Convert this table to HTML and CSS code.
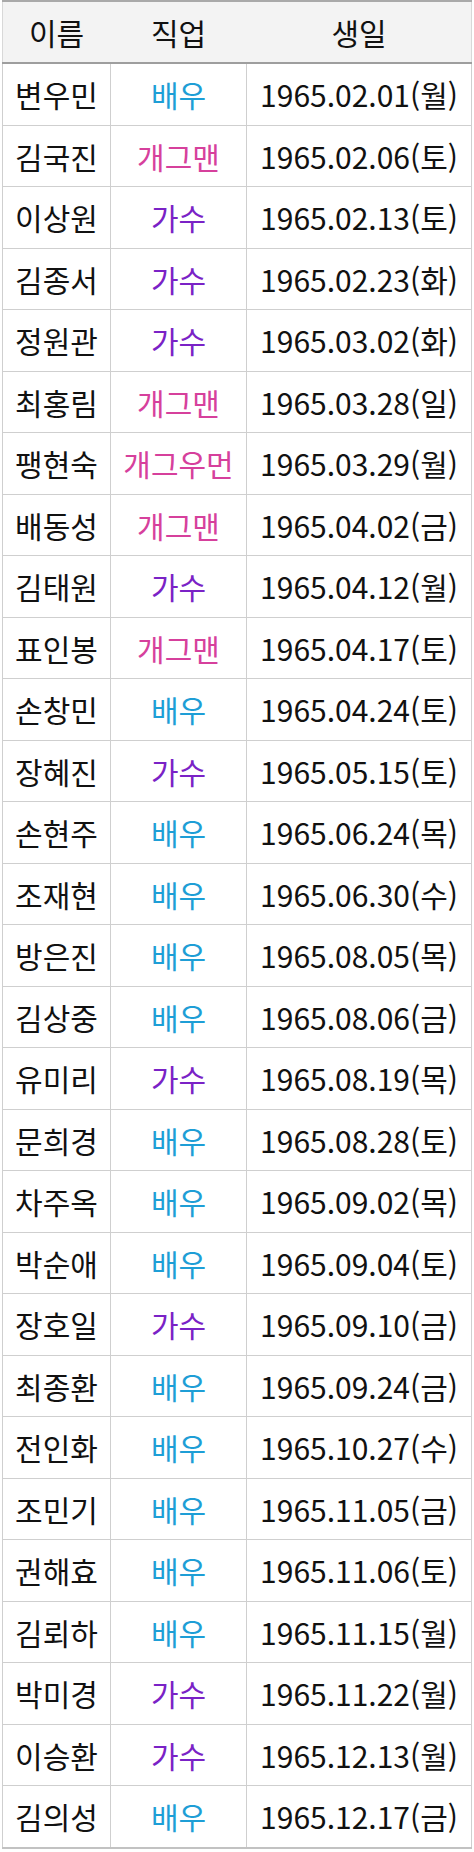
FILE: index.html
```html
<!DOCTYPE html>
<html lang="ko">
<head>
<meta charset="utf-8">
<link rel="stylesheet" href="styles.css">
</head>
<body>
<div class="wrap">
<table class="tbl">
<colgroup><col class="c1"><col class="c2"><col class="c3"></colgroup>
<thead>
<tr><th>이름</th><th>직업</th><th>생일</th></tr>
</thead>
<tbody>
<tr><td>변우민</td><td class="actor">배우</td><td>1965.02.01(월)</td></tr>
<tr><td>김국진</td><td class="comic">개그맨</td><td>1965.02.06(토)</td></tr>
<tr><td>이상원</td><td class="singer">가수</td><td>1965.02.13(토)</td></tr>
<tr><td>김종서</td><td class="singer">가수</td><td>1965.02.23(화)</td></tr>
<tr><td>정원관</td><td class="singer">가수</td><td>1965.03.02(화)</td></tr>
<tr><td>최홍림</td><td class="comic">개그맨</td><td>1965.03.28(일)</td></tr>
<tr><td>팽현숙</td><td class="comic">개그우먼</td><td>1965.03.29(월)</td></tr>
<tr><td>배동성</td><td class="comic">개그맨</td><td>1965.04.02(금)</td></tr>
<tr><td>김태원</td><td class="singer">가수</td><td>1965.04.12(월)</td></tr>
<tr><td>표인봉</td><td class="comic">개그맨</td><td>1965.04.17(토)</td></tr>
<tr><td>손창민</td><td class="actor">배우</td><td>1965.04.24(토)</td></tr>
<tr><td>장혜진</td><td class="singer">가수</td><td>1965.05.15(토)</td></tr>
<tr><td>손현주</td><td class="actor">배우</td><td>1965.06.24(목)</td></tr>
<tr><td>조재현</td><td class="actor">배우</td><td>1965.06.30(수)</td></tr>
<tr><td>방은진</td><td class="actor">배우</td><td>1965.08.05(목)</td></tr>
<tr><td>김상중</td><td class="actor">배우</td><td>1965.08.06(금)</td></tr>
<tr><td>유미리</td><td class="singer">가수</td><td>1965.08.19(목)</td></tr>
<tr><td>문희경</td><td class="actor">배우</td><td>1965.08.28(토)</td></tr>
<tr><td>차주옥</td><td class="actor">배우</td><td>1965.09.02(목)</td></tr>
<tr><td>박순애</td><td class="actor">배우</td><td>1965.09.04(토)</td></tr>
<tr><td>장호일</td><td class="singer">가수</td><td>1965.09.10(금)</td></tr>
<tr><td>최종환</td><td class="actor">배우</td><td>1965.09.24(금)</td></tr>
<tr><td>전인화</td><td class="actor">배우</td><td>1965.10.27(수)</td></tr>
<tr><td>조민기</td><td class="actor">배우</td><td>1965.11.05(금)</td></tr>
<tr><td>권해효</td><td class="actor">배우</td><td>1965.11.06(토)</td></tr>
<tr><td>김뢰하</td><td class="actor">배우</td><td>1965.11.15(월)</td></tr>
<tr><td>박미경</td><td class="singer">가수</td><td>1965.11.22(월)</td></tr>
<tr><td>이승환</td><td class="singer">가수</td><td>1965.12.13(월)</td></tr>
<tr><td>김의성</td><td class="actor">배우</td><td>1965.12.17(금)</td></tr>
</tbody>
</table>
</div>
</body>
</html>
```

FILE: styles.css
```css
html, body {
  margin: 0;
  padding: 0;
  background: #ffffff;
}
.wrap {
  padding: 0 3px 0 2px;
}
.tbl {
  width: 469px;
  border-collapse: collapse;
  table-layout: fixed;
  font-family: "Noto Sans CJK KR", "Noto Sans", sans-serif;
  font-size: 30px;
  color: #111;
}
.c1 { width: 108px; }
.c2 { width: 136px; }
.c3 { width: 225px; }
.tbl th, .tbl td {
  border: 1px solid #cfcfcf;
  text-align: center;
  padding: 0;
  line-height: 1;
  font-weight: 400;
  white-space: nowrap;
}
.tbl thead th {
  background: #f3f3f3;
  height: 60px;
  border-top: 2px solid #a9a9a9;
  border-bottom: 2px solid #9e9e9e;
  border-left-color: #f3f3f3;
  border-right-color: #f3f3f3;
}
.tbl thead th:first-child { border-left-color: #d8d8d8; }
.tbl thead th:last-child { border-right-color: #d8d8d8; }
.tbl tbody td {
  height: 60.5px;
}
.tbl tbody tr:last-child td {
  border-bottom: 2px solid #c2c2c2;
}
.actor { color: #1e9ed6; }
.comic { color: #d6409c; }
.singer { color: #7a22c6; }
```
